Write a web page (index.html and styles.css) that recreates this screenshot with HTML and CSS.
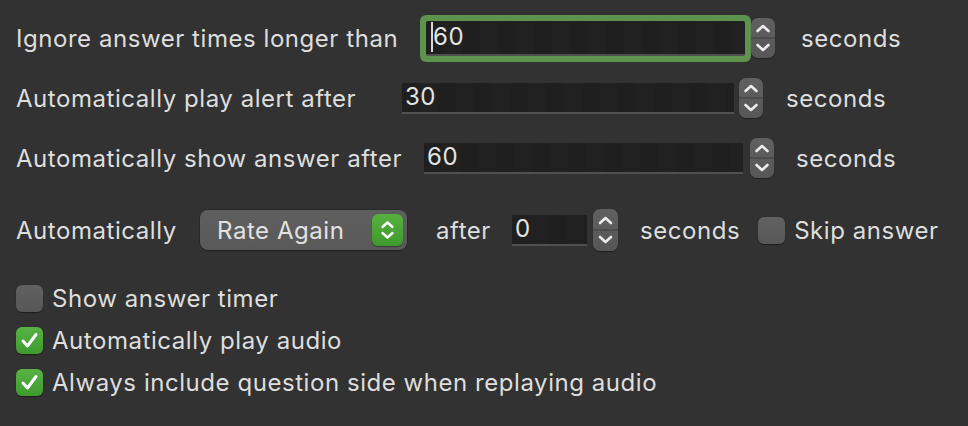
FILE: index.html
```html
<!DOCTYPE html>
<html>
<head>
<meta charset="utf-8">
<link rel="stylesheet" href="styles.css">
</head>
<body>
<div class="panel">
  <div class="row">
    <span class="label label-ignore">Ignore answer times longer than</span>
    <div class="field field-ignore focused"><span class="caret"></span><span class="value">60</span></div>
    <div class="spin spin-ignore">
      <svg width="24" height="40" viewBox="0 0 24 40"><path d="M6.5 13 L12 8 L17.5 13" class="chev"/><line x1="0" y1="20" x2="24" y2="20" class="div"/><path d="M6.5 27 L12 32 L17.5 27" class="chev"/></svg>
    </div>
    <span class="unit unit-ignore">seconds</span>
  </div>
  <div class="row">
    <span class="label label-alert">Automatically play alert after</span>
    <div class="field field-alert"><span class="value">30</span></div>
    <div class="spin spin-alert">
      <svg width="24" height="40" viewBox="0 0 24 40"><path d="M6.5 13 L12 8 L17.5 13" class="chev"/><line x1="0" y1="20" x2="24" y2="20" class="div"/><path d="M6.5 27 L12 32 L17.5 27" class="chev"/></svg>
    </div>
    <span class="unit unit-alert">seconds</span>
  </div>
  <div class="row">
    <span class="label label-show">Automatically show answer after</span>
    <div class="field field-show"><span class="value">60</span></div>
    <div class="spin spin-show">
      <svg width="24" height="40" viewBox="0 0 24 40"><path d="M6.5 13 L12 8 L17.5 13" class="chev"/><line x1="0" y1="20" x2="24" y2="20" class="div"/><path d="M6.5 27 L12 32 L17.5 27" class="chev"/></svg>
    </div>
    <span class="unit unit-show">seconds</span>
  </div>
  <div class="row row-auto">
    <span class="label label-auto">Automatically</span>
    <div class="combo">
      <span class="combo-text">Rate Again</span>
      <span class="combo-btn">
        <svg width="31" height="32" viewBox="0 0 31 32"><path d="M10.5 13 L15.5 8.5 L20.5 13" class="cchev"/><path d="M10.5 19 L15.5 23.5 L20.5 19" class="cchev"/></svg>
      </span>
    </div>
    <span class="after">after</span>
    <div class="field field-zero"><span class="value">0</span></div>
    <div class="spin spin-zero">
      <svg width="25" height="42" viewBox="0 0 25 42"><path d="M7 14 L12.5 9 L18 14" class="chev"/><line x1="0" y1="21" x2="25" y2="21" class="div"/><path d="M7 28 L12.5 33 L18 28" class="chev"/></svg>
    </div>
    <span class="unit unit-zero">seconds</span>
    <span class="check off check-skip"></span>
    <span class="check-label">Skip answer</span>
  </div>
  <div class="checks">
    <div class="check-row">
      <span class="check off"></span>
      <span class="check-label">Show answer timer</span>
    </div>
    <div class="check-row">
      <span class="check on"><svg width="27" height="27" viewBox="0 0 27 27"><path d="M7 14 L11.5 19 L20 7.5" class="tick"/></svg></span>
      <span class="check-label">Automatically play audio</span>
    </div>
    <div class="check-row">
      <span class="check on"><svg width="27" height="27" viewBox="0 0 27 27"><path d="M7 14 L11.5 19 L20 7.5" class="tick"/></svg></span>
      <span class="check-label">Always include question side when replaying audio</span>
    </div>
  </div>
</div>
</body>
</html>
```
FILE: styles.css
```css
html, body {
  margin: 0;
  padding: 0;
  background: #323232;
}
body {
  width: 968px;
  height: 426px;
  overflow: hidden;
  font-family: "Inter", "Open Sans", sans-serif;
  font-size: 24px;
  letter-spacing: 0.55px;
  color: #dedede;
}
.panel {
  padding: 8px 0 0 16px;
  display: flex;
  flex-direction: column;
}
.row {
  height: 60px;
  display: flex;
  align-items: center;
  white-space: nowrap;
}
.label { flex: none; }
.label-ignore { width: 404px; }
.label-alert { width: 386px; }
.label-show { width: 408px; }

.field {
  flex: none;
  height: 31px;
  box-sizing: border-box;
  background: #1f1f1f repeating-linear-gradient(90deg, rgba(255,255,255,0) 0 18px, rgba(255,255,255,0.008) 18px 36px);
  border-bottom: 2px solid #505050;
  display: flex;
  align-items: center;
  padding-left: 3px;
  line-height: 1;
}
.field .value { color: #e4e4e4; }
.field-ignore {
  width: 319px;
  height: 35px;
  margin-left: 6px;
  border-radius: 2px;
  box-shadow: 0 0 0 6px #5e924f;
  padding-left: 5px;
}
.caret {
  width: 2px;
  height: 30px;
  background: #d8d8d8;
  margin-right: 0;
}
.field-alert { width: 332px; }
.field-show { width: 319px; }
.field-zero { width: 75px; }

.spin {
  flex: none;
  width: 24px;
  height: 40px;
  border-radius: 7px;
  background: linear-gradient(#606060, #575757);
  box-shadow: 0 0.5px 1px rgba(0,0,0,0.4);
}
.spin svg { display: block; }
.chev {
  fill: none;
  stroke: #ececec;
  stroke-width: 2.6;
  stroke-linecap: round;
  stroke-linejoin: round;
}
.div { stroke: #474747; stroke-width: 1.5; }
.spin-ignore { margin-left: 6px; }
.spin-alert { margin-left: 5px; }
.spin-show { margin-left: 7px; }
.spin-zero { width: 25px; height: 42px; margin-left: 6px; }

.unit-ignore { margin-left: 26px; }
.unit-alert { margin-left: 23px; }
.unit-show { margin-left: 22px; }
.unit-zero { margin-left: 22px; }

.row-auto {
  margin-top: 12px;
}
.label-auto { width: 184px; }
.combo {
  flex: none;
  width: 207px;
  height: 40px;
  box-sizing: border-box;
  border-radius: 8px;
  background: linear-gradient(#5f5f5f, #595959);
  box-shadow: 0 0 0 0.5px rgba(0,0,0,0.35), 0 1px 1px rgba(0,0,0,0.3);
  display: flex;
  align-items: center;
  justify-content: space-between;
  padding: 0 4px 0 17px;
}
.combo-text { color: #e2e2e2; }
.combo-btn {
  width: 31px;
  height: 32px;
  border-radius: 6px;
  background: linear-gradient(#55b040, #3f9a2e);
  box-shadow: 0 0.5px 1px rgba(0,0,0,0.4);
}
.combo-btn svg { display: block; }
.cchev {
  fill: none;
  stroke: #ffffff;
  stroke-width: 2.4;
  stroke-linecap: round;
  stroke-linejoin: round;
}
.after { margin-left: 29px; width: 76px; }

.check {
  flex: none;
  width: 27px;
  height: 27px;
  border-radius: 6px;
  box-sizing: border-box;
}
.check svg { display: block; }
.check.off {
  background: linear-gradient(#616161, #575757);
  box-shadow: 0 0.5px 1px rgba(0,0,0,0.45);
}
.check.on {
  background: linear-gradient(#58b244, #409b2f);
  box-shadow: 0 0.5px 1px rgba(0,0,0,0.45);
}
.tick {
  fill: none;
  stroke: #ffffff;
  stroke-width: 3;
  stroke-linecap: round;
  stroke-linejoin: round;
}
.check-skip { margin-left: 18px; }
.check-label { margin-left: 9px; }

.checks {
  margin-top: 17px;
  display: flex;
  flex-direction: column;
}
.check-row {
  height: 42px;
  display: flex;
  align-items: center;
  white-space: nowrap;
}
```
